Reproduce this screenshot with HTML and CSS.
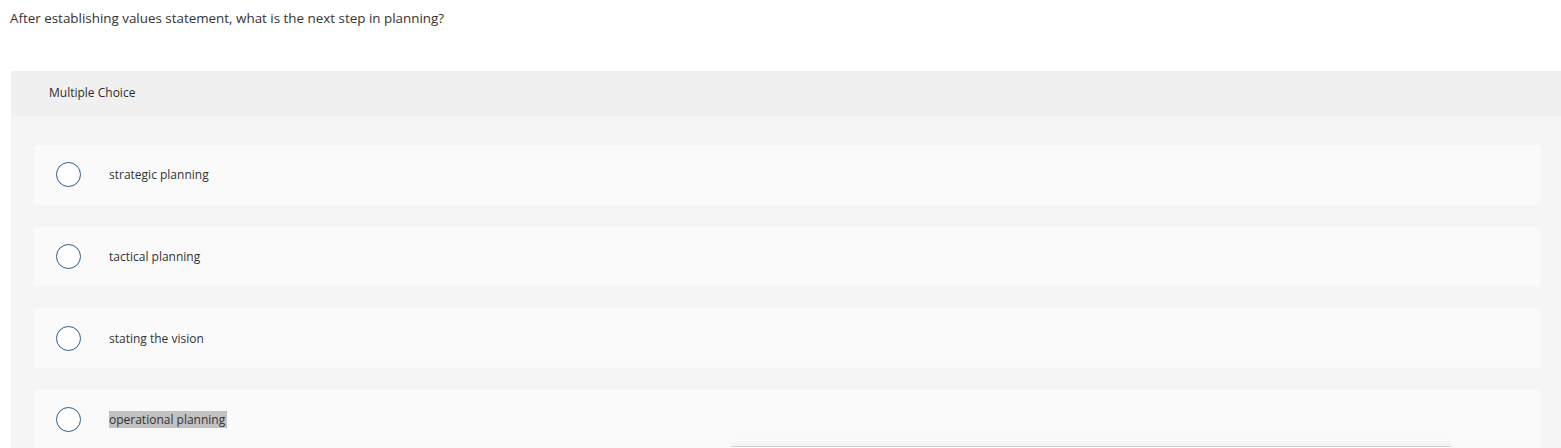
FILE: index.html
```html
<!DOCTYPE html>
<html>
<head>
<meta charset="utf-8">
<link rel="stylesheet" href="styles.css">
</head>
<body>
<div class="question">After establishing values statement, what is the next step in planning?</div>
<div class="panel">
  <div class="panel-header">Multiple Choice</div>
  <div class="options">
    <div class="option"><span class="radio"></span><span class="label">strategic planning</span></div>
    <div class="option"><span class="radio"></span><span class="label">tactical planning</span></div>
    <div class="option"><span class="radio"></span><span class="label">stating the vision</span></div>
    <div class="option"><span class="radio"></span><span class="label selected">operational planning</span></div>
  </div>
</div>
<div class="popup"></div>
</body>
</html>
```

FILE: styles.css
```css
html, body {
  margin: 0;
  padding: 0;
  background: #fff;
  overflow: hidden;
  height: 448px;
}
body {
  font-family: "Open Sans", "Liberation Sans", sans-serif;
  color: #333;
  position: relative;
}
.question {
  font-size: 13.4px;
  line-height: 18px;
  padding: 9px 0 0 10px;
  height: 62px;
  box-sizing: border-box;
}
.panel {
  margin-left: 11px;
  margin-top: 9px;
  background: #f5f5f5;
  height: 377px;
}
.panel-header {
  background: #f0f0f0;
  height: 45px;
  box-sizing: border-box;
  padding: 14px 0 0 38px;
  font-size: 12px;
  line-height: 16px;
  color: #2e2e2e;
}
.options {
  padding: 29px 20px 0 23px;
  display: flex;
  flex-direction: column;
  gap: 22px;
}
.option {
  background: #fafafa;
  border-radius: 4px;
  height: 59.7px;
  flex: none;
  display: flex;
  align-items: center;
  padding-left: 22px;
}
.radio {
  width: 23px;
  height: 23px;
  border: 1.5px solid #2b5d91;
  border-radius: 50%;
  background: #fff;
  flex: none;
}
.label {
  margin-left: 28px;
  font-size: 12px;
  line-height: 17px;
  color: #333;
}
.selected {
  background: #c2c2c2;
  padding-right: 2px;
}
.popup {
  position: absolute;
  left: 731px;
  top: 446px;
  width: 720px;
  height: 2px;
  background: #fff;
  box-shadow: 0 0 8px rgba(0,0,0,0.12);
  border-top: 1px solid #d0d0d0;
}
```
